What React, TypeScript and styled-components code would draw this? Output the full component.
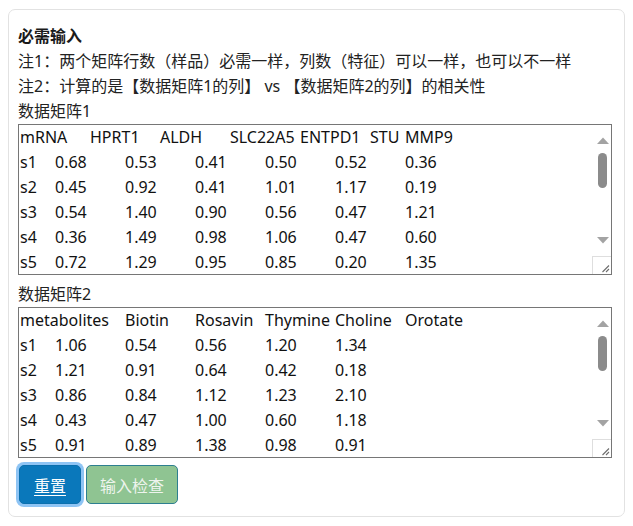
import * as React from 'react'
import styled, { createGlobalStyle } from 'styled-components'

const GlobalStyle = createGlobalStyle`
  body {
    margin: 8px;
    background: #fff;
    font-family: 'Noto Sans', 'Noto Sans CJK SC', sans-serif;
    color: #222;
  }
`

const matrix1 = [
  'mRNA\tHPRT1\tALDH\tSLC22A5\tENTPD1\tSTU\tMMP9',
  ['s1', '0.68', '0.53', '0.41', '0.50', '0.52', '0.36'],
  ['s2', '0.45', '0.92', '0.41', '1.01', '1.17', '0.19'],
  ['s3', '0.54', '1.40', '0.90', '0.56', '0.47', '1.21'],
  ['s4', '0.36', '1.49', '0.98', '1.06', '0.47', '0.60'],
  ['s5', '0.72', '1.29', '0.95', '0.85', '0.20', '1.35'],
  ['s6', '0.81', '1.12', '0.77', '0.64', '0.93', '0.58'],
  ['s7', '0.39', '0.86', '1.05', '0.72', '0.66', '1.02'],
  ['s8', '0.57', '1.33', '0.49', '0.91', '1.24', '0.45'],
  ['s9', '0.62', '0.71', '0.88', '1.15', '0.38', '0.97'],
  ['s10', '0.44', '1.08', '0.63', '0.59', '0.82', '1.11'],
]

const matrix2 = [
  'metabolites\tBiotin\tRosavin\tThymine\tCholine\tOrotate',
  ['s1', '1.06', '0.54', '0.56', '1.20', '1.34'],
  ['s2', '1.21', '0.91', '0.64', '0.42', '0.18'],
  ['s3', '0.86', '0.84', '1.12', '1.23', '2.10'],
  ['s4', '0.43', '0.47', '1.00', '0.60', '1.18'],
  ['s5', '0.91', '0.89', '1.38', '0.98', '0.91'],
  ['s6', '0.77', '1.15', '0.83', '1.41', '0.66'],
  ['s7', '1.32', '0.62', '0.95', '0.71', '1.27'],
  ['s8', '0.58', '1.04', '1.26', '0.88', '0.74'],
  ['s9', '1.09', '0.73', '0.49', '1.16', '1.52'],
  ['s10', '0.69', '1.22', '0.87', '0.53', '0.99'],
]

// header row is tab separated, data rows need two tabs to land on the column
const toText = (rows: (string | string[])[]) =>
  rows
    .map(row =>
      typeof row === 'string' ? row : `${row[0]}\t${row.slice(1).join('\t\t')}`
    )
    .join('\n')

const Arrow = ({ down }: { down?: boolean }) => (
  <svg width="12" height="7" viewBox="0 0 12 7">
    <polygon points={down ? '0,0 12,0 6,6.5' : '0,7 12,7 6,0.5'} fill="#a3a3a3" />
  </svg>
)

const Grip = () => (
  <svg width="17" height="17" viewBox="0 0 17 17">
    <path d="M15 8.5 L8.5 15 M15 12 L12 15" stroke="#6e6e6e" strokeWidth="1.1" fill="none" />
  </svg>
)

const Matrix = ({ value }: { value: string }) => (
  <MatrixBox>
    <MatrixInput wrap="off" spellCheck={false} defaultValue={value} />
    <ScrollBar>
      <ArrowButton $top>
        <Arrow />
      </ArrowButton>
      <Track>
        <Thumb />
      </Track>
      <ArrowButton>
        <Arrow down />
      </ArrowButton>
      <Corner>
        <Grip />
      </Corner>
    </ScrollBar>
  </MatrixBox>
)

export default function App() {
  return (
    <>
      <GlobalStyle />
      <Card>
        <Title>必需输入</Title>
        <Line>注1：两个矩阵行数（样品）必需一样，列数（特征）可以一样，也可以不一样</Line>
        <Line>注2：计算的是【数据矩阵1的列】 vs 【数据矩阵2的列】的相关性</Line>
        <Line>数据矩阵1</Line>
        <Matrix value={toText(matrix1)} />
        <Label>数据矩阵2</Label>
        <Matrix value={toText(matrix2)} />
        <ButtonRow>
          <ResetButton>重置</ResetButton>
          <CheckButton>输入检查</CheckButton>
        </ButtonRow>
      </Card>
    </>
  )
}

const Card = styled.div`
  box-sizing: border-box;
  width: 617px;
  height: 508px;
  margin-top: 1px;
  padding: 14px 9px 0 9px;
  border: 1px solid #e2e2e2;
  border-radius: 7px;
  font-size: 16px;
  line-height: 25px;
`

const Title = styled.div`
  font-weight: bold;
  color: #1a1a1a;
`

const Line = styled.div`
  color: #222;
`

const Label = styled(Line)`
  margin-top: 7px;
`

const MatrixBox = styled.div`
  display: flex;
  box-sizing: border-box;
  width: 594px;
  height: 151px;
  border: 1px solid #767676;
  background: #fff;
`

const MatrixInput = styled.textarea`
  flex: 1;
  min-width: 0;
  margin: 0;
  padding: 0 1px;
  border: none;
  font-family: 'Noto Sans', 'Noto Sans CJK SC', sans-serif;
  font-size: 16px;
  line-height: 25px;
  color: #111;
  background: transparent;
  white-space: pre;
  tab-size: 35px;
  overflow: hidden;
  resize: none;
  outline: none;
`

const ScrollBar = styled.div`
  display: flex;
  flex-direction: column;
  align-items: center;
  width: 17px;
  flex-shrink: 0;
`

const ArrowButton = styled.div<{ $top?: boolean }>`
  display: flex;
  align-items: center;
  justify-content: center;
  width: 100%;
  height: ${p => (p.$top ? 26 : 20)}px;
  padding-top: ${p => (p.$top ? 4 : 0)}px;
  box-sizing: border-box;
  margin-bottom: ${p => (p.$top ? 0 : 6)}px;
`

const Track = styled.div`
  flex: 1;
  display: flex;
  justify-content: center;
  padding-top: 2px;
`

const Thumb = styled.div`
  width: 9px;
  height: 35px;
  border-radius: 5px;
  background: #8b8b8b;
`

const Corner = styled.div`
  box-sizing: border-box;
  width: 19px;
  height: 18px;
  margin-left: -2px;
  border-top: 1px solid #dedede;
  border-left: 1px solid #dedede;
  display: flex;
  align-items: flex-end;
  justify-content: flex-end;
`

const ButtonRow = styled.div`
  display: flex;
  gap: 5px;
  margin-top: 7px;
  padding-left: 1px;
`

const BaseButton = styled.button`
  box-sizing: border-box;
  height: 39px;
  padding: 0 12px;
  border-radius: 5px;
  font-family: 'Noto Sans', 'Noto Sans CJK SC', sans-serif;
  font-size: 16px;
  cursor: pointer;
`

const ResetButton = styled(BaseButton)`
  width: 62px;
  background: #0a78bb;
  border: 1px solid #0a6fae;
  color: #fff;
  text-decoration: underline;
  text-underline-offset: 3px;
  box-shadow: 0 0 0 3px #8ec4f4;
`

const CheckButton = styled(BaseButton)`
  width: 92px;
  background: #8fc492;
  border: 1px solid #2d7f90;
  color: #eef4ee;
`
